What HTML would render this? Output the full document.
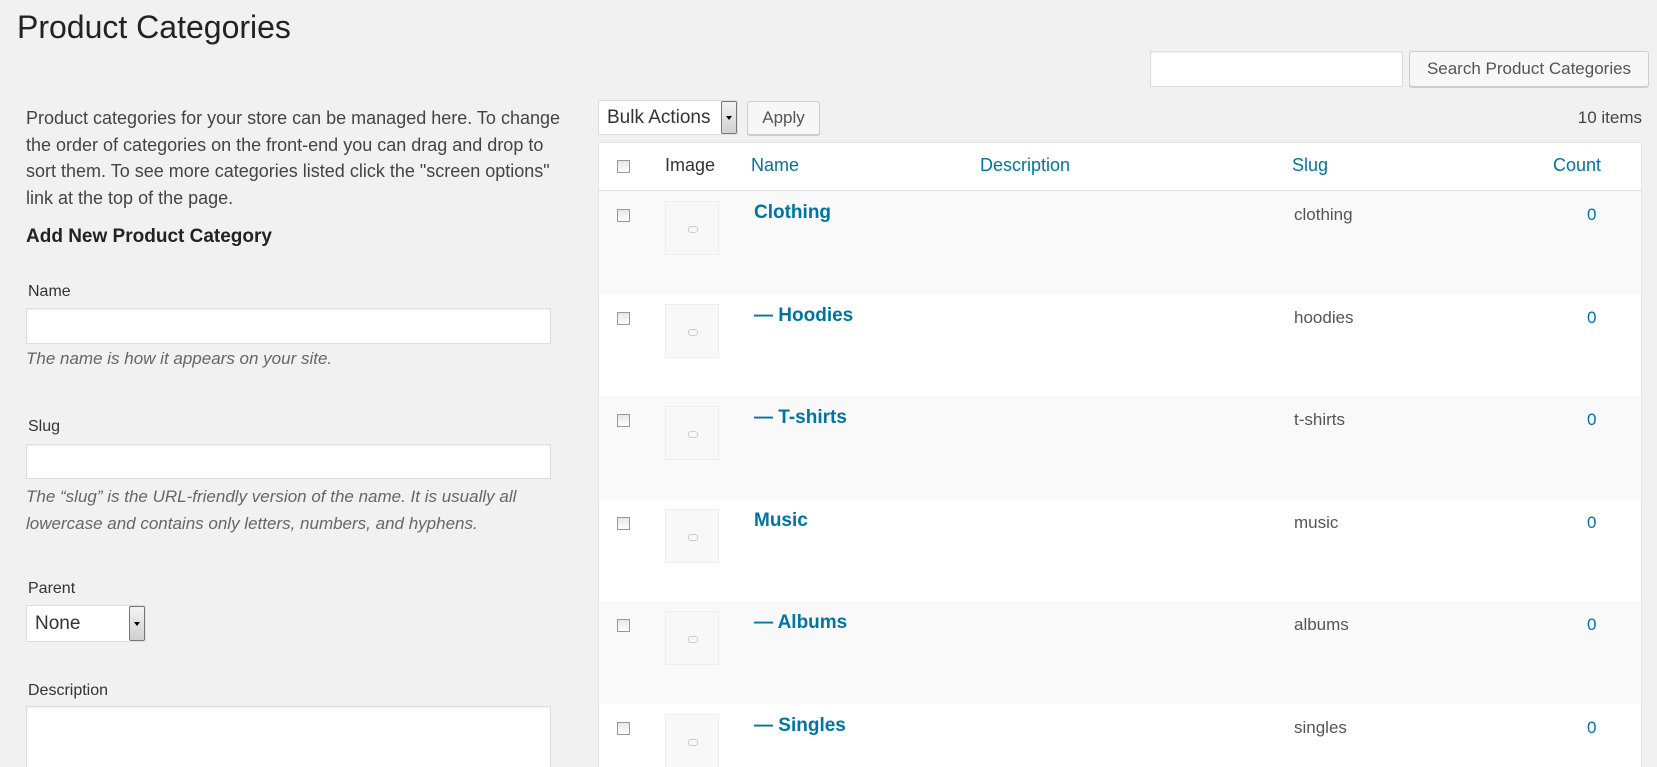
<!DOCTYPE html>
<html style="width:1657px;height:767px;overflow:hidden"><head><style>
*{box-sizing:border-box;margin:0;padding:0}
body{width:1657px;height:767px;overflow:hidden;background:#f1f1f1;font-family:"Liberation Sans",sans-serif;color:#444;position:relative}
.a{position:absolute;white-space:nowrap}
.inp{position:absolute;background:#fff;border:1px solid #ddd;box-shadow:inset 0 1px 2px rgba(0,0,0,.07)}
.btn{position:absolute;background:#f7f7f7;border:1px solid #ccc;border-radius:3px;box-shadow:0 1px 0 #ccc;color:#555;font-size:17px;text-align:center}
.sel{position:absolute;background:#fff;border:1px solid #ddd;font-size:19px;color:#333}
.arr{position:absolute;right:0;top:0;bottom:0;width:16px;background:linear-gradient(#f4f4f4,#d0d0d0);border:1px solid #777;border-radius:2px}
.arr:after{content:"";position:absolute;left:4px;top:50%;margin-top:-2px;border:3px solid transparent;border-top:4px solid #000}
.lbl{font-size:16px;color:#333}
.help{font-size:17px;font-style:italic;color:#666}
.cb{position:absolute;width:13px;height:13px;border:1px solid #999;background:linear-gradient(#e6e6e6,#fff)}
.row{position:absolute;left:599px;width:1042px;height:103px}
.thumb{position:absolute;left:665px;width:54px;height:54px;border:1px solid #eee;background:#f8f8f8}
.thumb:after{content:"";position:absolute;left:22px;top:24px;width:8px;height:5px;border:1px solid #ccc;border-radius:3px}
.lk{color:#0074a2}
.nm{font-size:19px;font-weight:bold;color:#0074a2}
.sl{font-size:17px;color:#555}
</style></head><body>
<div class="a" style="left:17px;top:9px;font-size:32px;color:#222">Product Categories</div>

<div class="inp" style="left:1150px;top:51px;width:253px;height:36px"></div>
<div class="btn" style="left:1409px;top:51px;width:240px;height:36px;line-height:34px">Search Product Categories</div>

<div class="a" style="left:26px;top:105px;font-size:18px;line-height:26.5px;color:#444;white-space:nowrap">Product categories for your store can be managed here. To change<br>the order of categories on the front-end you can drag and drop to<br>sort them. To see more categories listed click the "screen options"<br>link at the top of the page.</div>
<div class="a" style="left:26px;top:226px;font-size:19px;font-weight:bold;color:#222">Add New Product Category</div>

<div class="a lbl" style="left:28px;top:283px">Name</div>
<div class="inp" style="left:26px;top:308px;width:525px;height:36px"></div>
<div class="a help" style="left:26px;top:349px">The name is how it appears on your site.</div>

<div class="a lbl" style="left:28px;top:418px">Slug</div>
<div class="inp" style="left:26px;top:444px;width:525px;height:35px"></div>
<div class="a help" style="left:26px;top:483px;line-height:27px">The “slug” is the URL-friendly version of the name. It is usually all<br>lowercase and contains only letters, numbers, and hyphens.</div>

<div class="a lbl" style="left:28px;top:580px">Parent</div>
<div class="sel" style="left:26px;top:605px;width:120px;height:37px;line-height:35px;padding-left:8px">None<div class="arr"></div></div>

<div class="a lbl" style="left:28px;top:682px">Description</div>
<div class="inp" style="left:26px;top:706px;width:525px;height:61px;border-bottom:none"></div>

<div class="sel" style="left:598px;top:100px;width:140px;height:35px;line-height:33px;padding-left:8px">Bulk Actions<div class="arr"></div></div>
<div class="btn" style="left:747px;top:101px;width:73px;height:34px;line-height:32px">Apply</div>
<div class="a" style="right:15px;top:108px;font-size:17px;color:#444">10 items</div>

<div style="position:absolute;left:598px;top:142px;width:1044px;height:625px;background:#fff;border:1px solid #e5e5e5;border-bottom:none"></div>
<div style="position:absolute;left:598px;top:190px;width:1044px;height:1px;background:#e1e1e1"></div>
<div class="cb" style="left:617px;top:160px"></div>
<div class="a" style="left:665px;top:155px;font-size:18px;color:#333">Image</div>
<div class="a lk" style="left:751px;top:155px;font-size:18px">Name</div>
<div class="a lk" style="left:980px;top:155px;font-size:18px">Description</div>
<div class="a lk" style="left:1292px;top:155px;font-size:18px">Slug</div>
<div class="a lk" style="left:1553px;top:155px;font-size:18px">Count</div>

<div class="row" style="top:191px;background:#f9f9f9"></div>
<div class="row" style="top:396px;background:#f9f9f9"></div>
<div class="row" style="top:601px;background:#f9f9f9"></div>

<div class="cb" style="left:617px;top:209px"></div><div class="thumb" style="top:201px"></div>
<div class="a nm" style="left:754px;top:202px">Clothing</div><div class="a sl" style="left:1294px;top:205px">clothing</div><div class="a lk" style="left:1587px;top:205px;font-size:17px">0</div>

<div class="cb" style="left:617px;top:312px"></div><div class="thumb" style="top:304px"></div>
<div class="a nm" style="left:754px;top:305px">— Hoodies</div><div class="a sl" style="left:1294px;top:308px">hoodies</div><div class="a lk" style="left:1587px;top:308px;font-size:17px">0</div>

<div class="cb" style="left:617px;top:414px"></div><div class="thumb" style="top:406px"></div>
<div class="a nm" style="left:754px;top:407px">— T-shirts</div><div class="a sl" style="left:1294px;top:410px">t-shirts</div><div class="a lk" style="left:1587px;top:410px;font-size:17px">0</div>

<div class="cb" style="left:617px;top:517px"></div><div class="thumb" style="top:509px"></div>
<div class="a nm" style="left:754px;top:510px">Music</div><div class="a sl" style="left:1294px;top:513px">music</div><div class="a lk" style="left:1587px;top:513px;font-size:17px">0</div>

<div class="cb" style="left:617px;top:619px"></div><div class="thumb" style="top:611px"></div>
<div class="a nm" style="left:754px;top:612px">— Albums</div><div class="a sl" style="left:1294px;top:615px">albums</div><div class="a lk" style="left:1587px;top:615px;font-size:17px">0</div>

<div class="cb" style="left:617px;top:722px"></div><div class="thumb" style="top:714px;height:53px;border-bottom:none"></div>
<div class="a nm" style="left:754px;top:715px">— Singles</div><div class="a sl" style="left:1294px;top:718px">singles</div><div class="a lk" style="left:1587px;top:718px;font-size:17px">0</div>
</body></html>
